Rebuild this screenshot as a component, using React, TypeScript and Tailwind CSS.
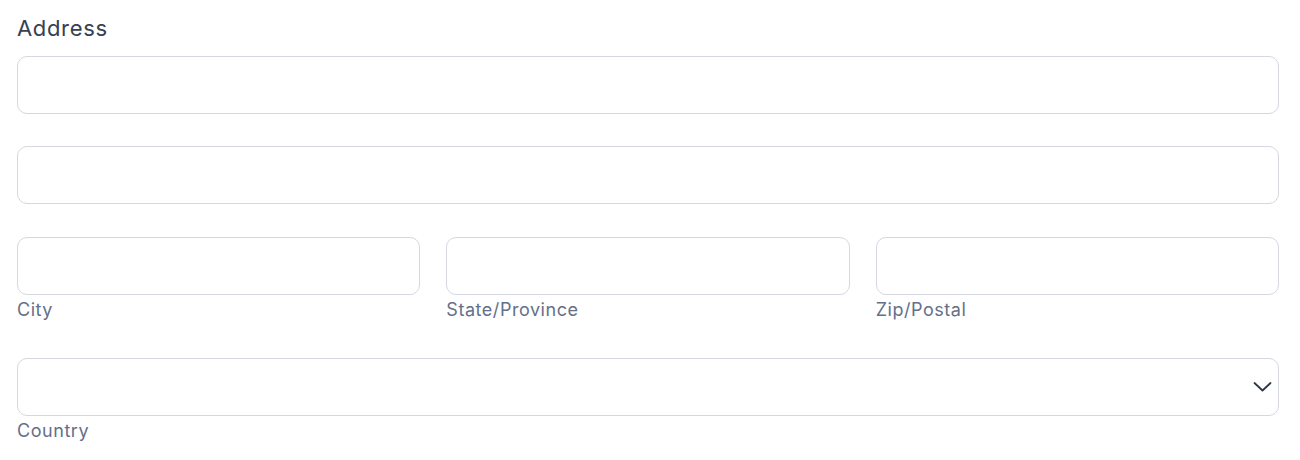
const inputClass =
  "block w-full h-[58px] rounded-[10px] border border-[#d5d8e0] bg-white px-4 text-[18px] text-gray-800 focus:outline-none";

function Field({ label }: { label: string }) {
  return (
    <div className="flex flex-col">
      <input type="text" className={inputClass} />
      <span className="mt-[3px] text-[18px] leading-6 tracking-[0.03em] text-[#64708a]">{label}</span>
    </div>
  );
}

export default function App() {
  return (
    <div
      className="min-h-[460px] bg-white pl-[17px] pr-[21px] pt-[14px]"
      style={{ fontFamily: "Inter, 'Noto Sans', sans-serif" }}
    >
      <label className="block text-[22px] leading-7 tracking-[0.03em] text-[#374151] mb-[14px]">Address</label>

      <div className="flex flex-col gap-[32px]">
        <input type="text" className={inputClass} />
        <input type="text" className={inputClass} />
      </div>

      <div className="mt-[33px] grid grid-cols-3 gap-[26px]">
        <Field label="City" />
        <Field label="State/Province" />
        <Field label="Zip/Postal" />
      </div>

      <div className="mt-[36px] flex flex-col">
        <div className="relative">
          <select className={`${inputClass} appearance-none pr-10`} defaultValue="">
            <option value=""></option>
          </select>
          <svg
            className="pointer-events-none absolute right-[7px] top-1/2 -translate-y-1/2"
            width="19"
            height="11"
            viewBox="0 0 19 11"
            fill="none"
          >
            <path d="M1.5 1.5 L9.5 9 L17.5 1.5" stroke="#2d3748" strokeWidth="1.8" strokeLinecap="round" strokeLinejoin="round" />
          </svg>
        </div>
        <span className="mt-[3px] text-[18px] leading-6 tracking-[0.03em] text-[#64708a]">Country</span>
      </div>
    </div>
  );
}
